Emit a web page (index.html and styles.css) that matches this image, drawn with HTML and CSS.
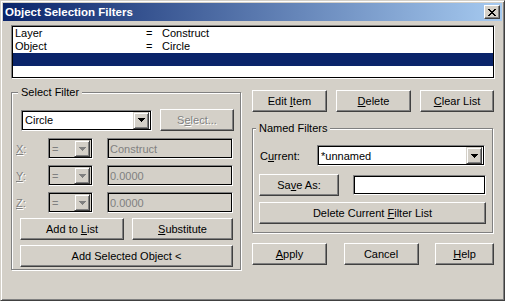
FILE: index.html
```html
<!DOCTYPE html>
<html lang="en">
<head>
<meta charset="UTF-8">
<meta name="viewport" content="width=device-width, initial-scale=1.0">
<title>Object Selection Filters</title>
<link rel="stylesheet" href="styles.css">
</head>
<body>

<div class="window">
  <div class="titlebar">
    <span class="title">Object Selection Filters</span>
    <button class="close-btn" title="Close">
      <svg width="8" height="7" viewBox="0 0 8 7" shape-rendering="crispEdges"><path d="M0 0h2v1h-2z M6 0h2v1h-2z M1 1h2v1h-2z M5 1h2v1h-2z M2 2h4v1h-4z M3 3h2v1h-2z M2 4h4v1h-4z M1 5h2v1h-2z M5 5h2v1h-2z M0 6h2v1h-2z M6 6h2v1h-2z"/></svg>
    </button>
  </div>

  <div class="client">
    <!-- current filter list -->
    <div class="listbox">
      <div class="row"><span class="col-name">Layer</span><span class="col-op">=</span><span>Construct</span></div>
      <div class="row"><span class="col-name">Object</span><span class="col-op">=</span><span>Circle</span></div>
      <div class="row selected"></div>
      <div class="row"></div>
    </div>

    <div class="panes">
      <fieldset class="group filter-group">
        <legend>Select Filter</legend>

        <div class="line type-line">
          <div class="combo type-combo">
            <span class="value">Circle</span>
            <span class="arrow"><svg width="7" height="4" viewBox="0 0 7 4" shape-rendering="crispEdges"><path d="M0 0h7v1h-7z M1 1h5v1h-5z M2 2h3v1h-3z M3 3h1v1h-1z"/></svg></span>
          </div>
          <button class="btn select-btn" disabled>S<u>e</u>lect...</button>
        </div>

        <div class="line coord-line x-line">
          <span class="coord-label"><u>X</u>:</span>
          <div class="combo op-combo disabled">
            <span class="value">=</span>
            <span class="arrow"><svg width="7" height="4" viewBox="0 0 7 4" shape-rendering="crispEdges"><path d="M0 0h7v1h-7z M1 1h5v1h-5z M2 2h3v1h-3z M3 3h1v1h-1z"/></svg></span>
          </div>
          <input class="field coord-field" type="text" value="Construct" disabled>
        </div>

        <div class="line coord-line">
          <span class="coord-label"><u>Y</u>:</span>
          <div class="combo op-combo disabled">
            <span class="value">=</span>
            <span class="arrow"><svg width="7" height="4" viewBox="0 0 7 4" shape-rendering="crispEdges"><path d="M0 0h7v1h-7z M1 1h5v1h-5z M2 2h3v1h-3z M3 3h1v1h-1z"/></svg></span>
          </div>
          <input class="field coord-field" type="text" value="0.0000" disabled>
        </div>

        <div class="line coord-line">
          <span class="coord-label"><u>Z</u>:</span>
          <div class="combo op-combo disabled">
            <span class="value">=</span>
            <span class="arrow"><svg width="7" height="4" viewBox="0 0 7 4" shape-rendering="crispEdges"><path d="M0 0h7v1h-7z M1 1h5v1h-5z M2 2h3v1h-3z M3 3h1v1h-1z"/></svg></span>
          </div>
          <input class="field coord-field" type="text" value="0.0000" disabled>
        </div>

        <div class="line add-line">
          <button class="btn add-btn">Add to <u>L</u>ist</button>
          <button class="btn subst-btn"><u>S</u>ubstitute</button>
        </div>

        <button class="btn add-selected-btn">Add Selected Object &lt;</button>
      </fieldset>

      <div class="right">
        <div class="btn-row">
          <button class="btn edit-btn">Edit <u>I</u>tem</button>
          <button class="btn delete-btn"><u>D</u>elete</button>
          <button class="btn clear-btn"><u>C</u>lear List</button>
        </div>

        <fieldset class="group named-group">
          <legend>Named Filters</legend>

          <div class="line">
            <span class="current-label">C<u>u</u>rrent:</span>
            <div class="combo current-combo">
              <span class="value">*unnamed</span>
              <span class="arrow"><svg width="7" height="4" viewBox="0 0 7 4" shape-rendering="crispEdges"><path d="M0 0h7v1h-7z M1 1h5v1h-5z M2 2h3v1h-3z M3 3h1v1h-1z"/></svg></span>
            </div>
          </div>

          <div class="line save-line">
            <button class="btn save-btn">Sa<u>v</u>e As:</button>
            <input class="field save-field" type="text" value="">
          </div>

          <button class="btn delete-list-btn">Delete Current <u>F</u>ilter List</button>
        </fieldset>

        <div class="btn-row bottom-row">
          <button class="btn apply-btn"><u>A</u>pply</button>
          <button class="btn cancel-btn">Cancel</button>
          <button class="btn help-btn"><u>H</u>elp</button>
        </div>
      </div>
    </div>
  </div>
</div>

</body>
</html>
```

FILE: styles.css
```css
* {
  box-sizing: border-box;
}

body {
  margin: 0;
  font-family: "Liberation Sans", Arial, sans-serif;
  font-size: 11px;
  color: #000;
  background-color: #d4d0c8;
}

u {
  text-underline-offset: 1px;
}

.window {
  width: 505px;
  height: 301px;
  padding: 2px;
  background-color: #d4d0c8;
  border: 1px solid;
  border-color: #d4d0c8 #404040 #404040 #d4d0c8;
  box-shadow: inset 1px 1px #fff, inset -1px -1px #808080;
}

.titlebar {
  height: 18px;
  display: flex;
  align-items: center;
  padding: 0 2px;
  background: linear-gradient(to right, #0a246a, #a6caf0);
}

.title {
  color: #fff;
  font-weight: bold;
  font-size: 11.5px;
}

.close-btn {
  margin-left: auto;
  width: 16px;
  height: 14px;
  padding: 0;
  display: flex;
  align-items: center;
  justify-content: center;
  background-color: #d4d0c8;
  border: 1px solid;
  border-color: #fff #404040 #404040 #fff;
  box-shadow: inset -1px -1px #808080;
}

.client {
  padding: 4px 7px 0 8px;
}

/* list of filter lines */
.listbox {
  height: 54px;
  padding: 1px;
  background-color: #fff;
  border: 1px solid;
  border-color: #808080 #fff #fff #808080;
  box-shadow: inset 0 0 0 1px #000;
}

.row {
  height: 13px;
  line-height: 13px;
  display: flex;
  padding-left: 2px;
  white-space: nowrap;
}

.row.selected {
  background-color: #0a246a;
}

.col-name {
  width: 131px;
}

.col-op {
  width: 16px;
}

.panes {
  display: flex;
  margin-top: 7px;
}

/* etched group boxes */
.group {
  margin: 0;
  min-width: 0;
  border: 1px solid #808080;
  box-shadow: inset 1px 1px #fff, 1px 1px #fff;
}

.group legend {
  padding: 0 3px;
  line-height: 13px;
  background-color: #d4d0c8;
}

.filter-group {
  width: 230px;
  height: 184px;
  padding: 10px 6px 0 4px;
}

.filter-group legend {
  margin-left: 2px;
}

.line {
  display: flex;
  align-items: center;
}

.type-line {
  margin-left: 5px;
  gap: 8px;
}

.coord-line {
  margin-top: 6px;
}

.x-line {
  margin-top: 7px;
}

.coord-label {
  width: 32px;
  color: #808080;
  text-shadow: 1px 1px #fff;
}

/* combo boxes */
.combo {
  height: 21px;
  display: flex;
  align-items: center;
  padding: 2px;
  background-color: #fff;
  border: 1px solid;
  border-color: #808080 #fff #fff #808080;
  box-shadow: inset 0 0 0 1px #000;
}

.combo .value {
  flex: 1;
  padding-left: 1px;
  white-space: nowrap;
}

.combo .arrow {
  width: 16px;
  height: 17px;
  display: flex;
  align-items: center;
  justify-content: center;
  background-color: #d4d0c8;
  border: 1px solid;
  border-color: #d4d0c8 #404040 #404040 #d4d0c8;
  box-shadow: inset 1px 1px #fff, inset -1px -1px #808080;
}

.combo.disabled {
  background-color: #d4d0c8;
  color: #808080;
}

.combo.disabled .arrow svg {
  fill: #808080;
}

.type-combo {
  width: 131px;
}

.op-combo {
  width: 45px;
}

.current-combo {
  width: 168px;
}

/* text fields */
.field {
  height: 21px;
  padding: 0 2px;
  font: inherit;
  color: #000;
  background-color: #fff;
  border: 1px solid;
  border-color: #808080 #fff #fff #808080;
  box-shadow: inset 0 0 0 1px #000;
  outline: none;
}

.field:disabled {
  background-color: #d4d0c8;
  color: #808080;
  -webkit-text-fill-color: #808080;
  opacity: 1;
}

.coord-field {
  width: 126px;
  margin-left: 14px;
}

/* push buttons */
.btn {
  height: 22px;
  padding: 0;
  font: inherit;
  color: #000;
  background-color: #d4d0c8;
  border: 1px solid;
  border-color: #fff #404040 #404040 #fff;
  box-shadow: inset -1px -1px #808080;
}

.btn:disabled {
  color: #808080;
  text-shadow: 1px 1px #fff;
}

.select-btn {
  width: 74px;
}

.add-line {
  margin-top: 5px;
  margin-left: 4px;
  gap: 8px;
}

.add-btn {
  width: 104px;
}

.subst-btn {
  width: 101px;
}

.add-selected-btn {
  display: block;
  width: 213px;
  margin: 5px 0 0 4px;
}

.right {
  width: 242px;
  margin-left: 11px;
  padding-top: 4px;
}

.btn-row {
  display: flex;
  justify-content: space-between;
}

.edit-btn,
.delete-btn {
  width: 75px;
}

.clear-btn {
  width: 74px;
}

.named-group {
  width: 241px;
  height: 111px;
  margin-top: 10px;
  padding: 10px 6px 0 6px;
}

.named-group legend {
  margin-left: -3px;
}

.current-label {
  width: 58px;
  padding-left: 1px;
}

.save-line {
  margin-top: 8px;
}

.save-btn {
  width: 80px;
}

.save-field {
  width: 133px;
  height: 20px;
  margin-left: auto;
}

.delete-list-btn {
  display: block;
  width: 227px;
  margin-top: 6px;
}

.bottom-row {
  margin-top: 10px;
}

.apply-btn,
.cancel-btn {
  width: 75px;
}

.help-btn {
  width: 59px;
}
```
